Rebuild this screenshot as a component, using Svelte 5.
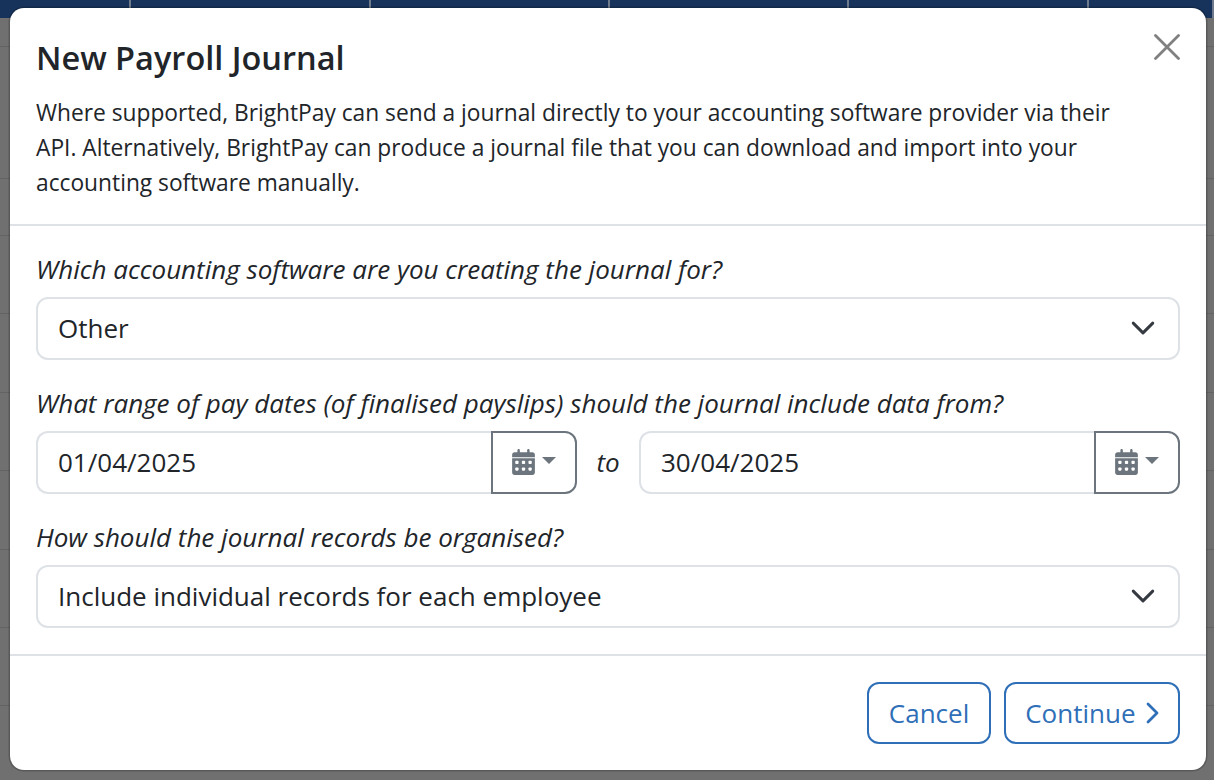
<script lang="ts">
  const software = 'Other';
  const organise = 'Include individual records for each employee';
  const columns = [131, 240, 239, 239, 240, 125];
  const rows = [46, 178, 235, 313, 392, 470, 549, 627, 705];
</script>

{#snippet calendar()}
  <svg class="cal" viewBox="0 0 448 512" width="23" height="26" aria-hidden="true">
    <path fill="currentColor" d="M128 0c13 0 24 11 24 24v40h144V24c0-13 11-24 24-24s24 11 24 24v40h56c26.500 0 48 21.500 48 48v48H0v-48c0-26.500 21.500-48 48-48h56V24c0-13 11-24 24-24zM0 184h448v280c0 26.500-21.500 48-48 48H48c-26.500 0-48-21.500-48-48z"/>
    <g fill="#fff">
      <rect x="62" y="232" width="64" height="64" rx="16"/>
      <rect x="192" y="232" width="64" height="64" rx="16"/>
      <rect x="322" y="232" width="64" height="64" rx="16"/>
      <rect x="62" y="362" width="64" height="64" rx="16"/>
      <rect x="192" y="362" width="64" height="64" rx="16"/>
      <rect x="322" y="362" width="64" height="64" rx="16"/>
    </g>
  </svg>
  <span class="caret"></span>
{/snippet}

{#snippet chevron()}
  <svg class="chevron" viewBox="0 0 16 16" width="26" height="26" aria-hidden="true">
    <path fill="none" stroke="currentColor" stroke-width="1.800" stroke-linecap="round" stroke-linejoin="round" d="M2 5l6 6 6-6"/>
  </svg>
{/snippet}

<div class="page">
  <div class="backdrop" aria-hidden="true">
    <div class="navbar">
      {#each columns as w}
        <span class="cell" style={`width: ${w}px`}></span>
      {/each}
    </div>
    {#each rows as y}
      <span class="rule" style={`top: ${y}px`}></span>
    {/each}
  </div>

  <div class="modal">
    <header class="modal-header">
      <h1>New Payroll Journal</h1>
      <button class="close" aria-label="Close">
        <svg viewBox="0 0 26 26" width="26" height="26" aria-hidden="true">
          <path fill="none" stroke="currentColor" stroke-width="2.800" stroke-linecap="round" d="M1.500 1.500l23 23M24.500 1.500l-23 23"/>
        </svg>
      </button>
      <p>Where supported, BrightPay can send a journal directly to your accounting software provider via their API. Alternatively, BrightPay can produce a journal file that you can download and import into your accounting software manually.</p>
    </header>

    <div class="modal-body">
      <label for="software">Which accounting software are you creating the journal for?</label>
      <div class="select" id="software">
        <span>{software}</span>
        {@render chevron()}
      </div>

      <label for="from">What range of pay dates (of finalised payslips) should the journal include data from?</label>
      <div class="range">
        <div class="date">
          <div class="date-input" id="from">01/04/2025</div>
          <button class="date-btn" aria-label="Pick start date">{@render calendar()}</button>
        </div>
        <em>to</em>
        <div class="date">
          <div class="date-input">30/04/2025</div>
          <button class="date-btn" aria-label="Pick end date">{@render calendar()}</button>
        </div>
      </div>

      <label for="organise">How should the journal records be organised?</label>
      <div class="select" id="organise">
        <span>{organise}</span>
        {@render chevron()}
      </div>
    </div>

    <footer class="modal-footer">
      <button class="btn">Cancel</button>
      <button class="btn">
        Continue
        <svg viewBox="0 0 14 22" width="14" height="22" aria-hidden="true">
          <path fill="none" stroke="currentColor" stroke-width="2.800" stroke-linecap="round" stroke-linejoin="round" d="M3 2l9 9-9 9"/>
        </svg>
      </button>
    </footer>
  </div>
</div>

<style>
  :global(body) {
    margin: 0;
    font-family: "Open Sans", "Noto Sans", sans-serif;
    color: #212529;
  }

  .page {
    position: relative;
    height: 780px;
    overflow: hidden;
    padding: 8px 8px 0 10px;
    box-sizing: border-box;
    background: #707070;
  }

  .backdrop {
    position: absolute;
    inset: 0;
  }

  .navbar {
    display: flex;
    height: 18px;
    background: #17335c;
  }

  .cell {
    box-sizing: border-box;
    border-right: 2px solid #6f7a8c;
  }

  .rule {
    position: absolute;
    left: 0;
    right: 0;
    height: 1px;
    background: #636363;
  }

  .modal {
    position: relative;
    width: 1196px;
    height: 762px;
    display: flex;
    flex-direction: column;
    background: #fff;
    border-radius: 14px;
    box-shadow: 0 0 0 1.500px rgba(0, 0, 0, 0.2);
  }

  .modal-header {
    position: relative;
    height: 218px;
    box-sizing: border-box;
    padding: 30px 26px 0;
    border-bottom: 2px solid #dee2e6;
  }

  h1 {
    margin: 0;
    font-size: 32.500px;
    font-weight: 600;
    line-height: 40px;
  }

  .modal-header p {
    margin: 17px 0 0;
    max-width: 1100px;
    font-size: 22.750px;
    line-height: 35px;
  }

  .close {
    position: absolute;
    top: 26px;
    right: 26px;
    padding: 0;
    border: 0;
    background: none;
    color: #808080;
    line-height: 0;
  }

  .modal-body {
    flex: 1;
    padding: 26px 26px 0;
  }

  label {
    display: block;
    height: 45px;
    font-size: 26px;
    font-style: italic;
    line-height: 34px;
  }

  .select,
  .date-input {
    display: flex;
    align-items: center;
    height: 62.500px;
    box-sizing: border-box;
    padding: 0 20px;
    border: 2px solid #dee2e6;
    font-size: 26px;
    background: #fff;
  }

  .select {
    justify-content: space-between;
    margin-bottom: 26.500px;
    border-radius: 12px;
  }

  .chevron {
    color: #343a40;
    margin-right: 2px;
  }

  .range {
    display: flex;
    align-items: center;
    margin-bottom: 26.500px;
  }

  .range em {
    width: 62px;
    text-align: center;
    font-size: 26px;
  }

  .date {
    display: flex;
    width: 541px;
  }

  .date-input {
    flex: 1;
    border-right: 0;
    border-radius: 12px 0 0 12px;
  }

  .date-btn {
    display: flex;
    align-items: center;
    justify-content: center;
    gap: 7px;
    width: 86px;
    height: 62.500px;
    padding: 0;
    border: 2px solid #6c757d;
    border-radius: 0 12px 12px 0;
    background: #fff;
    color: #6c757d;
  }

  .caret {
    width: 0;
    height: 0;
    margin-bottom: 4px;
    border-top: 7px solid currentColor;
    border-left: 7px solid transparent;
    border-right: 7px solid transparent;
  }

  .modal-footer {
    display: flex;
    justify-content: flex-end;
    gap: 13px;
    height: 116px;
    box-sizing: border-box;
    padding: 26px 26px 0;
    border-top: 2px solid #dee2e6;
  }

  .btn {
    display: inline-flex;
    align-items: center;
    gap: 9px;
    height: 62px;
    padding: 0 19.500px;
    border: 2px solid #2f6fb8;
    border-radius: 12px;
    background: #fff;
    color: #2f6fb8;
    font: inherit;
    font-size: 26px;
  }
</style>
